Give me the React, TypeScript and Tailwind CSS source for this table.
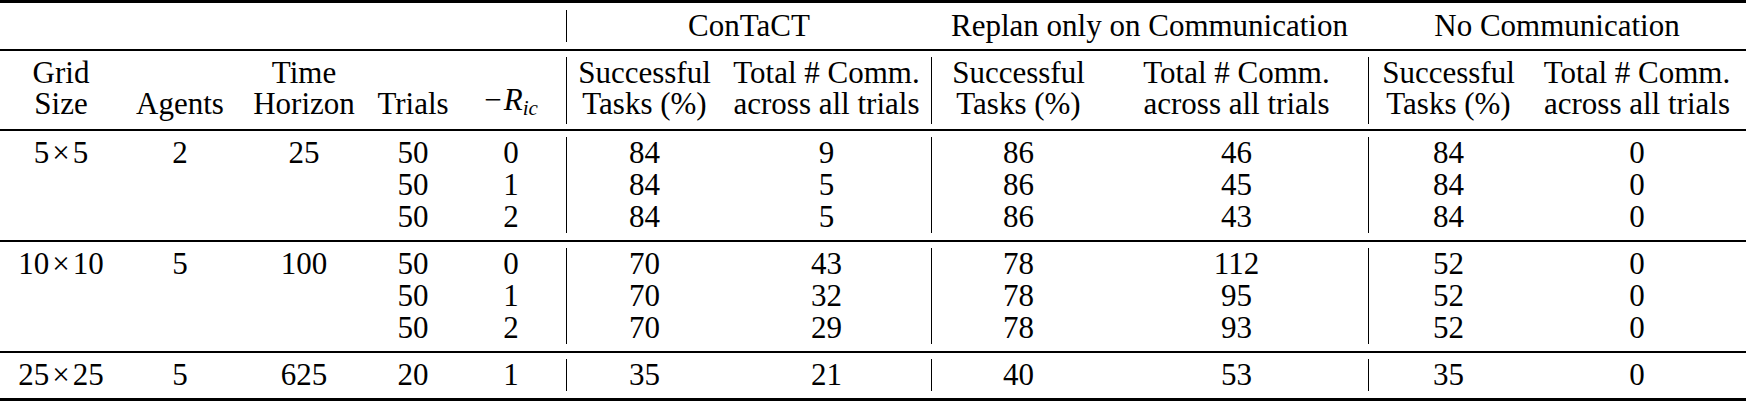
const grid =
  "grid grid-cols-[122px_116px_132px_86px_110px_156px_209px_174px_263px_160px_218px]";

// columns that start with a vertical rule
const ruled = [5, 7, 9];

const groups = [
  {
    size: "5",
    agents: "2",
    horizon: "25",
    rows: [
      ["50", "0", "84", "9", "86", "46", "84", "0"],
      ["50", "1", "84", "5", "86", "45", "84", "0"],
      ["50", "2", "84", "5", "86", "43", "84", "0"],
    ],
  },
  {
    size: "10",
    agents: "5",
    horizon: "100",
    rows: [
      ["50", "0", "70", "43", "78", "112", "52", "0"],
      ["50", "1", "70", "32", "78", "95", "52", "0"],
      ["50", "2", "70", "29", "78", "93", "52", "0"],
    ],
  },
  {
    size: "25",
    agents: "5",
    horizon: "625",
    rows: [["20", "1", "35", "21", "40", "53", "35", "0"]],
  },
];

function Dim({ n }: { n: string }) {
  return (
    <span>
      {n}
      <span className="mx-[3px]">×</span>
      {n}
    </span>
  );
}

function Ric() {
  return (
    <span>
      <span className="mr-[2px]">−</span>
      <i>R</i>
      <i className="text-[21px] relative top-[5px]">ic</i>
    </span>
  );
}

function Rule({ thick }: { thick?: boolean }) {
  return <div className={thick ? "h-[3px] bg-black" : "h-[2px] bg-black"} />;
}

export default function App() {
  const headers: [string, React.ReactNode][] = [
    ["Grid", "Size"],
    ["", "Agents"],
    ["Time", "Horizon"],
    ["", "Trials"],
    ["", <Ric key="r" />],
    ["Successful", "Tasks (%)"],
    ["Total # Comm.", "across all trials"],
    ["Successful", "Tasks (%)"],
    ["Total # Comm.", "across all trials"],
    ["Successful", "Tasks (%)"],
    ["Total # Comm.", "across all trials"],
  ];

  return (
    <div className="w-[1746px] bg-white text-black [font-family:'Liberation_Serif',serif] text-[31px]">
      <Rule thick />

      {/* method group titles */}
      <div className={`${grid} pt-[7px] pb-[7px] leading-[32px]`}>
        <div className="col-span-5" />
        <div className="col-span-2 border-l border-black text-center">ConTaCT</div>
        <div className="col-span-2 text-center">Replan only on Communication</div>
        <div className="col-span-2 text-center">No Communication</div>
      </div>

      <Rule />

      {/* column headers, bottom aligned on two lines */}
      <div className={`${grid} pt-[6px] pb-[5px] leading-[31px]`}>
        {headers.map((h, i) => (
          <div
            key={i}
            className={`flex flex-col items-center justify-end h-[67px] pb-[5px] ${
              ruled.includes(i) ? "border-l border-black" : ""
            }`}
          >
            <p className="text-center whitespace-nowrap">
              {h[0] && (
                <>
                  {h[0]}
                  <br />
                </>
              )}
              {h[1]}
            </p>
          </div>
        ))}
      </div>

      {groups.map((g, gi) => {
        const lead = [<Dim key="d" n={g.size} />, g.agents, g.horizon];
        return (
          <div key={gi}>
            <Rule />
            <div className={`${grid} pt-[6px] pb-[7px] leading-[32px]`}>
              {Array.from({ length: 11 }).map((_, ci) => (
                <div
                  key={ci}
                  className={`flex flex-col items-center ${
                    ruled.includes(ci) ? "border-l border-black" : ""
                  }`}
                >
                  {ci < 3 ? (
                    <span className="block h-[32px]">{lead[ci]}</span>
                  ) : (
                    g.rows.map((r, ri) => (
                      <span key={ri} className="block h-[32px]">
                        {r[ci - 3]}
                      </span>
                    ))
                  )}
                </div>
              ))}
            </div>
          </div>
        );
      })}

      <Rule thick />
    </div>
  );
}
